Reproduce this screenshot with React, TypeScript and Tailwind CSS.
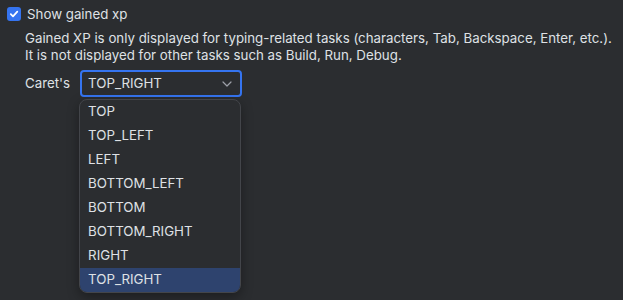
import React from "react";

const items = ["TOP", "TOP_LEFT", "LEFT", "BOTTOM_LEFT", "BOTTOM", "BOTTOM_RIGHT", "RIGHT", "TOP_RIGHT"];

export default function App() {
  return (
    <div
      className="w-[623px] h-[300px] bg-[#2b2d30] text-[#dfe1e5] text-[13.3px] overflow-hidden"
      style={{ fontFamily: "Inter, 'Noto Sans', sans-serif" }}
    >
      <div className="flex items-center gap-[6px] ml-[7px] pt-[7px]">
        <div className="w-[14px] h-[14px] rounded-[3px] bg-[#3574f0] flex items-center justify-center shrink-0">
          <svg width="10" height="10" viewBox="0 0 10 10" fill="none">
            <path d="M1.8 5.2 L4 7.4 L8.3 2.6" stroke="#ffffff" strokeWidth="1.7" strokeLinecap="round" strokeLinejoin="round" />
          </svg>
        </div>
        <span className="leading-[14px]">Show gained xp</span>
      </div>
      <div className="pl-[25px] mt-[9px] leading-[17px]">
        <div>Gained XP is only displayed for typing-related tasks (characters, Tab, Backspace, Enter, etc.).</div>
        <div>It is not displayed for other tasks such as Build, Run, Debug.</div>
      </div>
      <div className="flex items-center pl-[25px] mt-[6px] gap-[10px]">
        <span>Caret's</span>
        <div className="relative">
          <div className="w-[162px] h-[27px] rounded-[4px] border-2 border-[#3574f0] bg-[#2b2d30] flex items-center justify-between pl-[6px] pr-[8px]">
            <span>TOP_RIGHT</span>
            <svg width="10" height="6" viewBox="0 0 10 6" fill="none">
              <path d="M1 1 L5 5 L9 1" stroke="#9da0a8" strokeWidth="1.2" strokeLinecap="round" strokeLinejoin="round" />
            </svg>
          </div>
          <div className="absolute left-[-1px] top-[29px] w-[162px] rounded-[8px] border border-[#43454a] bg-[#2b2d30] overflow-hidden shadow-[0_4px_12px_rgba(0,0,0,0.35)]">
            {items.map((it, i) => (
              <div
                key={it}
                className={
                  "h-[24px] flex items-center pl-[8px] " +
                  (i === items.length - 1 ? "bg-[#2e436e]" : "")
                }
              >
                {it}
              </div>
            ))}
          </div>
        </div>
      </div>
    </div>
  );
}
